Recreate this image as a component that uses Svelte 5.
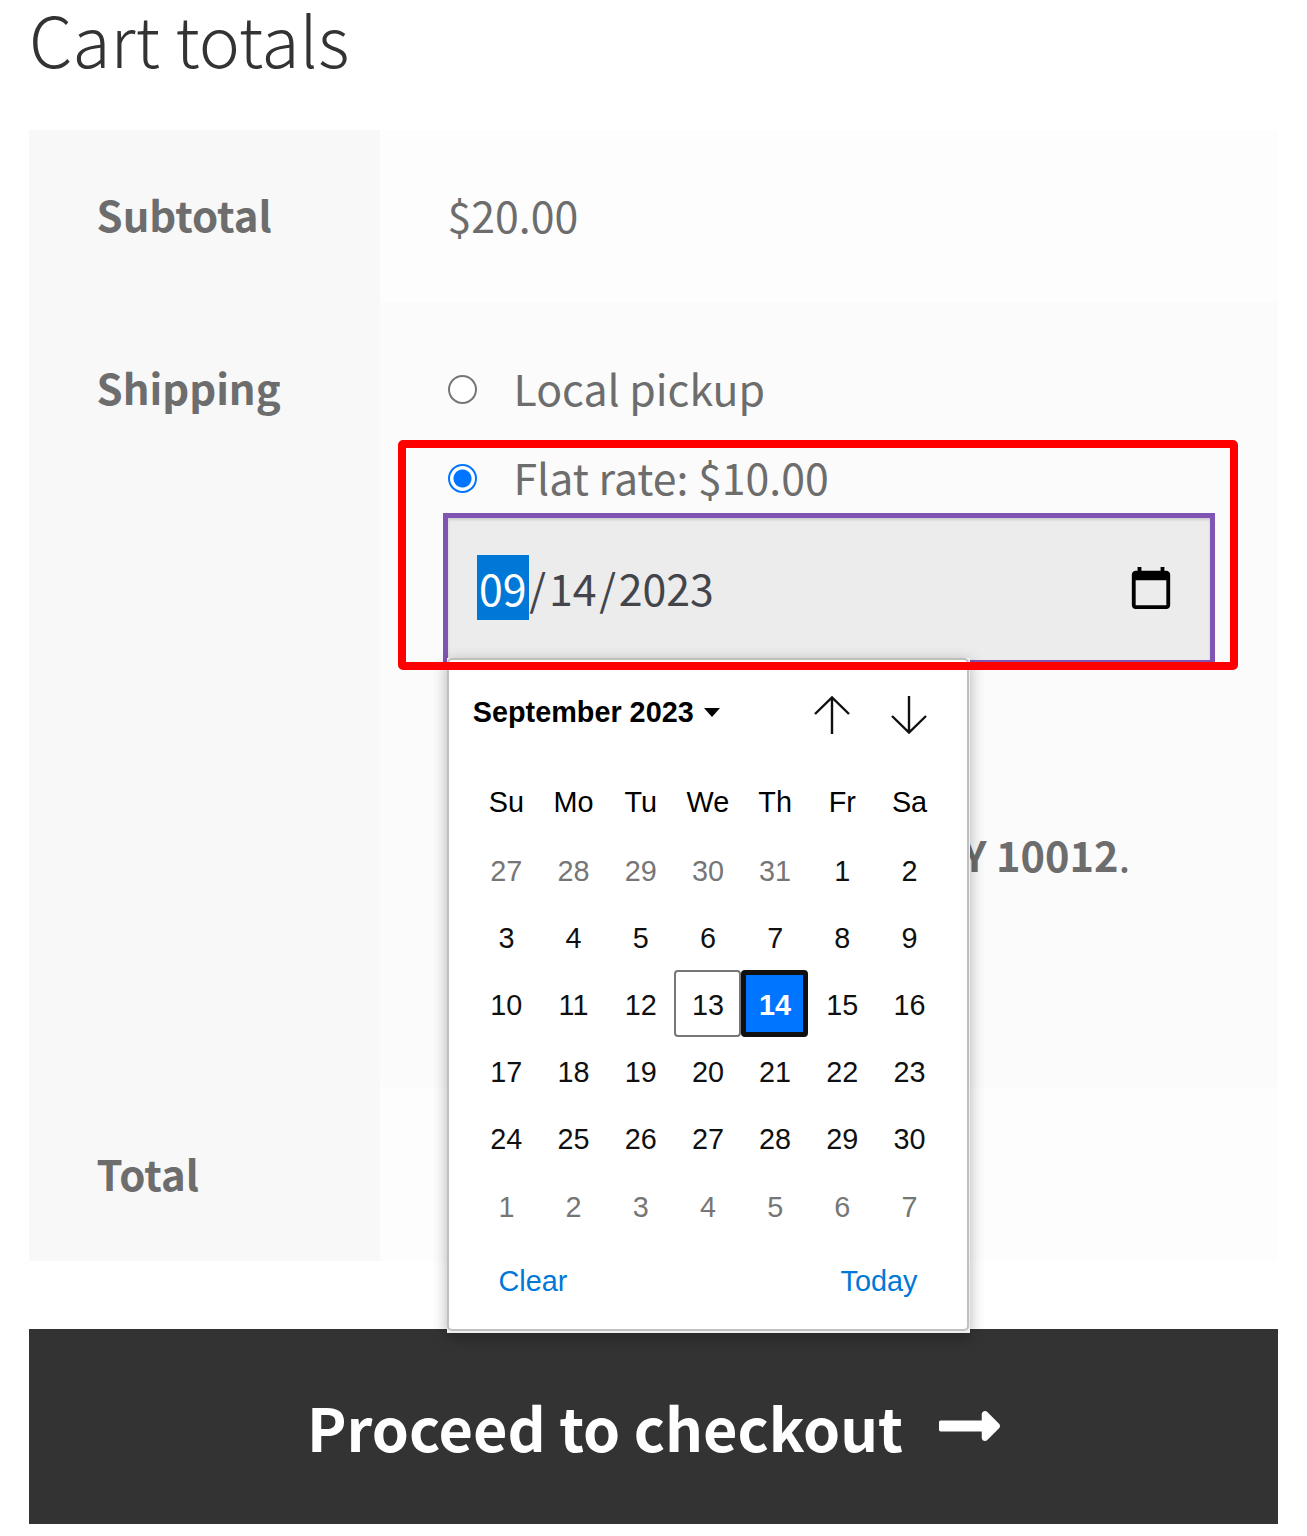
<script lang="ts">
  const weekdays = ["Su", "Mo", "Tu", "We", "Th", "Fr", "Sa"];
  const today = 13;

  let method = $state("flat_rate");
  let selected = $state(14);

  // Six full weeks starting on Sunday, August 27.
  const days = Array.from({ length: 42 }, (_, i) => {
    const n = i - 4;
    if (n < 1) return { day: 31 + n, outside: true };
    if (n > 30) return { day: n - 30, outside: true };
    return { day: n, outside: false };
  });
</script>

<div class="cart-totals">
  <h2>Cart totals</h2>

  <div class="table">
    <div class="row subtotal">
      <div class="th">Subtotal</div>
      <div class="td">$20.00</div>
    </div>

    <div class="row shipping">
      <div class="th">Shipping</div>
      <div class="td">
        <label class="method">
          <input type="radio" value="local_pickup" bind:group={method} />
          <span>Local pickup</span>
        </label>
        <label class="method">
          <input type="radio" value="flat_rate" bind:group={method} />
          <span>Flat rate: $10.00</span>
        </label>

        <div class="date-field">
          <div class="date-value">
            <span class="part active">09</span><span>/</span><span class="part">14</span><span>/</span><span class="part">2023</span>
          </div>
          <svg class="calendar-icon" viewBox="0 0 24 24">
            <path d="M20 3h-1V1h-2v2H7V1H5v2H4c-1.1 0-2 .9-2 2v16c0 1.1.9 2 2 2h16c1.1 0 2-.9 2-2V5c0-1.1-.9-2-2-2zm0 18H4V8h16v13z" />
          </svg>

          <div class="picker">
            <div class="picker-inner">
              <div class="picker-head">
                <button class="month">September 2023 <i class="caret"></i></button>
                <button class="nav" aria-label="Previous month">
                  <svg viewBox="0 0 36 40"><path d="M18 39V2M1 19 18 2.5 35 19" /></svg>
                </button>
                <button class="nav" aria-label="Next month">
                  <svg viewBox="0 0 36 40"><path d="M18 1v37M1 21l17 16.5L35 21" /></svg>
                </button>
              </div>
              <div class="grid weekdays">
                {#each weekdays as name}
                  <span>{name}</span>
                {/each}
              </div>
              <div class="grid">
                {#each days as d}
                  <button
                    class="day"
                    class:outside={d.outside}
                    class:today={!d.outside && d.day === today}
                    class:selected={!d.outside && d.day === selected}
                    onclick={() => !d.outside && (selected = d.day)}
                  >{d.day}</button>
                {/each}
              </div>
              <div class="picker-foot">
                <button>Clear</button>
                <button>Today</button>
              </div>
            </div>
          </div>
        </div>

        <p class="destination"><strong>NY 10012</strong>.</p>
        <div class="highlight"></div>
      </div>
    </div>

    <div class="row total">
      <div class="th">Total</div>
      <div class="td"></div>
    </div>
  </div>

  <button class="checkout">
    <span>Proceed to checkout</span>
    <svg viewBox="0 0 448 512">
      <path d="M313.941 216H12c-6.627 0-12 5.373-12 12v56c0 6.627 5.373 12 12 12h301.941v46.059c0 21.382 25.851 32.09 40.971 16.971l86.059-86.059c9.373-9.373 9.373-24.569 0-33.941l-86.059-86.059c-15.119-15.119-40.971-4.411-40.971 16.971V216z" />
    </svg>
  </button>
</div>

<style>
  :global(body) {
    margin: 0;
    background: #fff;
  }
  .cart-totals {
    box-sizing: border-box;
    height: 1536px;
    padding: 0 29px;
    color: #6d6d6d;
    font: 42.8px/66px "Noto Sans CJK SC", sans-serif;
  }
  button {
    padding: 0;
    border: 0;
    background: none;
    color: inherit;
    font: inherit;
  }
  h2 {
    margin: 0;
    height: 130px;
    color: #333;
    font-size: 69.4px;
    font-weight: 300;
    line-height: 76px;
  }

  .row {
    display: grid;
    grid-template-columns: 351px 1fr;
  }
  .th,
  .td {
    box-sizing: border-box;
    padding: 51px 67.5px 0;
  }
  .th {
    background: #f8f8f8;
    font-size: 41.9px;
    font-weight: 600;
  }
  .td {
    background: #fdfdfd;
  }
  .subtotal {
    height: 172px;
  }
  .shipping {
    height: 785px;
  }
  .shipping .th {
    padding-top: 52px;
  }
  .shipping .td {
    position: relative;
    padding: 53px 63px 0;
    background: #fbfbfb;
  }
  .total {
    height: 174px;
  }
  .total .th {
    padding-top: 53px;
  }

  .method {
    display: flex;
    align-items: center;
    gap: 37px;
    height: 68px;
    padding-left: 4.5px;
    margin-bottom: 21px;
  }
  .method + .method {
    margin-bottom: 1px;
  }
  .method span {
    padding-bottom: 5px;
  }
  .method input {
    appearance: none;
    box-sizing: border-box;
    width: 29px;
    height: 29px;
    margin: 0;
    border: 2px solid #767676;
    border-radius: 50%;
    background: #fff;
  }
  .method input:checked {
    border-color: #0075ff;
    background: radial-gradient(circle, #0075ff 8.5px, #fff 9.5px);
  }

  .date-field {
    position: relative;
    box-sizing: border-box;
    display: flex;
    align-items: center;
    justify-content: space-between;
    width: 772px;
    height: 152px;
    padding: 0 36px 3px 29px;
    border: 5px solid #7f54b3;
    background: #ececec;
    box-shadow: inset 0 2px 3px rgba(0, 0, 0, 0.13);
    color: #43454b;
  }
  .date-value {
    display: flex;
    height: 65px;
    line-height: 64px;
  }
  .date-value span {
    padding: 0 0.8px;
  }
  .date-value .part {
    padding: 0 2px;
  }
  .date-value .active {
    background: #0078d7;
    color: #fff;
  }
  .calendar-icon {
    width: 46px;
    height: 46px;
    fill: #000;
  }

  .picker {
    position: absolute;
    top: 140px;
    left: -1px;
    z-index: 1;
    box-sizing: border-box;
    width: 523px;
    height: 675px;
    padding: 0 1px 2px 0;
    background: #eee;
    box-shadow: 0 4px 14px rgba(0, 0, 0, 0.3);
    color: #101010;
    font: 28.8px/67.2px "Liberation Sans", Arial, sans-serif;
  }
  .picker-inner {
    box-sizing: border-box;
    height: 100%;
    padding: 21px 24px 0 23.4px;
    border: 2px solid #bfbfbf;
    border-radius: 5px;
    background: #fff;
  }
  .picker-head {
    display: flex;
    align-items: center;
    height: 67px;
    margin-bottom: 19px;
  }
  .month {
    display: flex;
    align-items: center;
    gap: 10px;
    margin: -4px auto 0 0.4px;
    color: #000;
    font-weight: 700;
  }
  .caret {
    border: 8.5px solid transparent;
    border-top: 9px solid #000;
    border-bottom: 0;
  }
  .nav {
    width: 77px;
    line-height: 0;
  }
  .nav:last-child {
    margin-right: -4.5px;
  }
  .nav svg {
    width: 36px;
    height: 40px;
    fill: none;
    stroke: #101010;
    stroke-width: 2.4;
  }
  .grid {
    display: grid;
    grid-template-columns: repeat(7, 67.2px);
    grid-auto-rows: 67.2px;
    text-align: center;
  }
  .weekdays {
    height: 68.6px;
    color: #000;
    line-height: 71px;
  }
  .weekdays span {
    padding-left: 0.8px;
  }
  .day {
    box-sizing: border-box;
    padding: 4px 0 0 0.8px;
    border: 2px solid transparent;
    border-radius: 4px;
    line-height: 59px;
  }
  .outside {
    color: #767676;
  }
  .today {
    border-color: #767676;
  }
  .selected {
    border: 5px solid #101010;
    background: #0075ff;
    color: #fff;
    font-weight: 700;
    line-height: 53px;
  }
  .picker-foot {
    display: flex;
    justify-content: space-between;
    padding: 9px 25.6px 0 26.2px;
    color: #0078d7;
  }

  .destination {
    margin: 155px 0 0;
    padding-left: 488.5px;
  }
  .destination strong {
    font-size: 41.5px;
    font-weight: 600;
  }
  .highlight {
    position: absolute;
    top: 138px;
    left: 18px;
    z-index: 2;
    box-sizing: border-box;
    width: 840px;
    height: 230px;
    border: 8px solid #f00;
    border-radius: 5px;
    pointer-events: none;
  }

  .checkout {
    display: flex;
    align-items: center;
    justify-content: center;
    gap: 36px;
    width: 100%;
    height: 195px;
    margin-top: 68px;
    padding-bottom: 2px;
    background: #333;
    color: #fff;
    font-size: 59.4px;
    font-weight: 600;
  }
  .checkout svg {
    width: 61px;
    height: 70px;
    fill: #fff;
  }
</style>
